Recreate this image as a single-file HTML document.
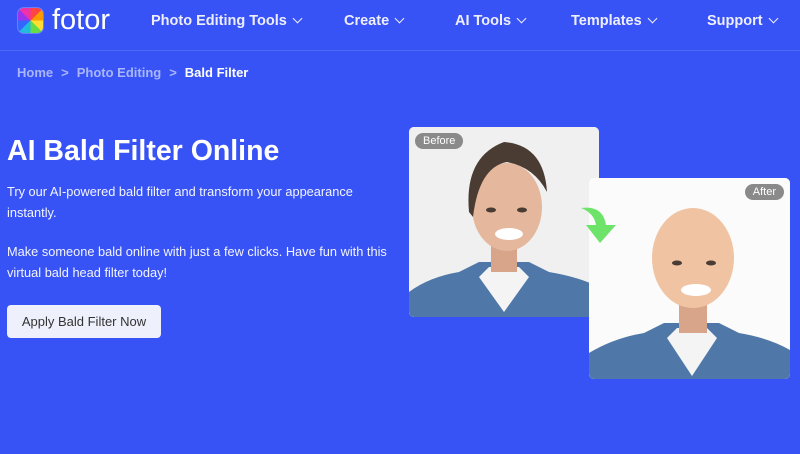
<!DOCTYPE html>
<html><head><meta charset="utf-8"><style>
*{margin:0;padding:0;box-sizing:border-box}
body{width:800px;height:454px;overflow:hidden;background:#3853f5;font-family:"Liberation Sans",sans-serif;color:#fff;position:relative}
.nav{position:absolute;top:0;left:0;width:800px;height:51px;border-bottom:1px solid #4f69f7}
.logo{position:absolute;left:17px;top:7px;width:27px;height:27px;border-radius:7px;overflow:hidden;background:conic-gradient(#f44 0 45deg,#f90 45deg 90deg,#fd3 90deg 135deg,#6d4 135deg 180deg,#2bd 180deg 225deg,#36f 225deg 270deg,#93e 270deg 315deg,#e3a 315deg 360deg);border:1px solid #6a7ff8}
.logotext{position:absolute;left:52px;top:4px;font-size:29px;color:#fff;letter-spacing:0}
.ni{position:absolute;top:13px;font-size:14.5px;font-weight:bold;color:#eef}
.ni::after{content:"";display:inline-block;width:6px;height:6px;border-right:1.7px solid #eef;border-bottom:1.7px solid #eef;transform:rotate(45deg);margin-left:7px;position:relative;top:-3px}
.bc{position:absolute;top:65px;left:17px;font-size:13px;font-weight:bold;color:#a9b6fb}
.bc b{color:#fff}
.bc span{margin:0 8px}
h1{position:absolute;left:7px;top:135px;font-size:28.5px;font-weight:bold}
p{position:absolute;left:7px;font-size:12.8px;line-height:21px;color:#f2f4ff}
.btn{position:absolute;left:7px;top:305px;width:154px;height:33px;background:#eef0fb;border-radius:4px;color:#333;font-size:13px;text-align:center;line-height:33px}
.card{position:absolute;border-radius:5px;overflow:hidden;background:#f2f2f2}
.tag{position:absolute;background:#8a8a8a;color:#fff;font-size:11px;border-radius:9px;padding:2px 8px}
</style></head><body>
<div class="nav">
<div class="logo"></div>
<div class="logotext">fotor</div>
<div class="ni" style="left:151px">Photo Editing Tools</div>
<div class="ni" style="left:344px">Create</div>
<div class="ni" style="left:455px">AI Tools</div>
<div class="ni" style="left:571px">Templates</div>
<div class="ni" style="left:707px">Support</div>
</div>
<div class="bc">Home<span>&gt;</span>Photo Editing<span>&gt;</span><b>Bald Filter</b></div>
<h1>AI Bald Filter Online</h1>
<p style="top:181px;width:365px">Try our AI-powered bald filter and transform your appearance instantly.</p>
<p style="top:241px;width:395px">Make someone bald online with just a few clicks. Have fun with this virtual bald head filter today!</p>
<div class="btn">Apply Bald Filter Now</div>

<div class="card" style="left:409px;top:127px;width:190px;height:190px">
<svg width="190" height="190">
<rect width="190" height="190" fill="#f0f0f0"/>
<path d="M0 190 L0 165 Q20 150 50 145 L70 135 L120 135 L140 145 Q170 150 190 160 L190 190Z" fill="#4f78a8"/>
<path d="M70 150 L95 185 L120 150 L110 140 L80 140Z" fill="#f4f4f4"/>
<rect x="82" y="110" width="26" height="35" fill="#d9a58a"/>
<ellipse cx="98" cy="80" rx="35" ry="44" fill="#e5b79c"/>
<path d="M60 85 Q55 30 95 15 Q135 18 138 65 Q125 40 98 35 Q70 40 64 90Z" fill="#4a3c33"/>
<ellipse cx="100" cy="107" rx="14" ry="6" fill="#fff"/>
<ellipse cx="82" cy="83" rx="5" ry="2.5" fill="#4a3c33"/>
<ellipse cx="113" cy="83" rx="5" ry="2.5" fill="#4a3c33"/>
</svg>
<div class="tag" style="left:6px;top:6px">Before</div>
</div>
<div class="card" style="left:589px;top:178px;width:201px;height:201px">
<svg width="201" height="201">
<rect width="201" height="201" fill="#fbfbfb"/>
<path d="M0 201 L0 175 Q25 160 55 155 L75 145 L130 145 L150 155 Q180 160 201 172 L201 201Z" fill="#4f78a8"/>
<path d="M78 160 L103 198 L128 160 L118 150 L88 150Z" fill="#f4f4f4"/>
<rect x="90" y="118" width="28" height="37" fill="#d9a58a"/>
<ellipse cx="104" cy="80" rx="41" ry="50" fill="#f0c3a3"/>
<ellipse cx="107" cy="112" rx="15" ry="6" fill="#fff"/>
<ellipse cx="88" cy="85" rx="5" ry="2.5" fill="#4a3c33"/>
<ellipse cx="122" cy="85" rx="5" ry="2.5" fill="#4a3c33"/>
</svg>
<div class="tag" style="right:6px;top:6px">After</div>
</div>
<svg style="position:absolute;left:578px;top:203px" width="40" height="42"><path d="M3 5 Q25 2 28 22 L38 22 L22 40 L8 22 L18 22 Q16 10 3 5Z" fill="#6ee36a"/></svg>
</body></html>
